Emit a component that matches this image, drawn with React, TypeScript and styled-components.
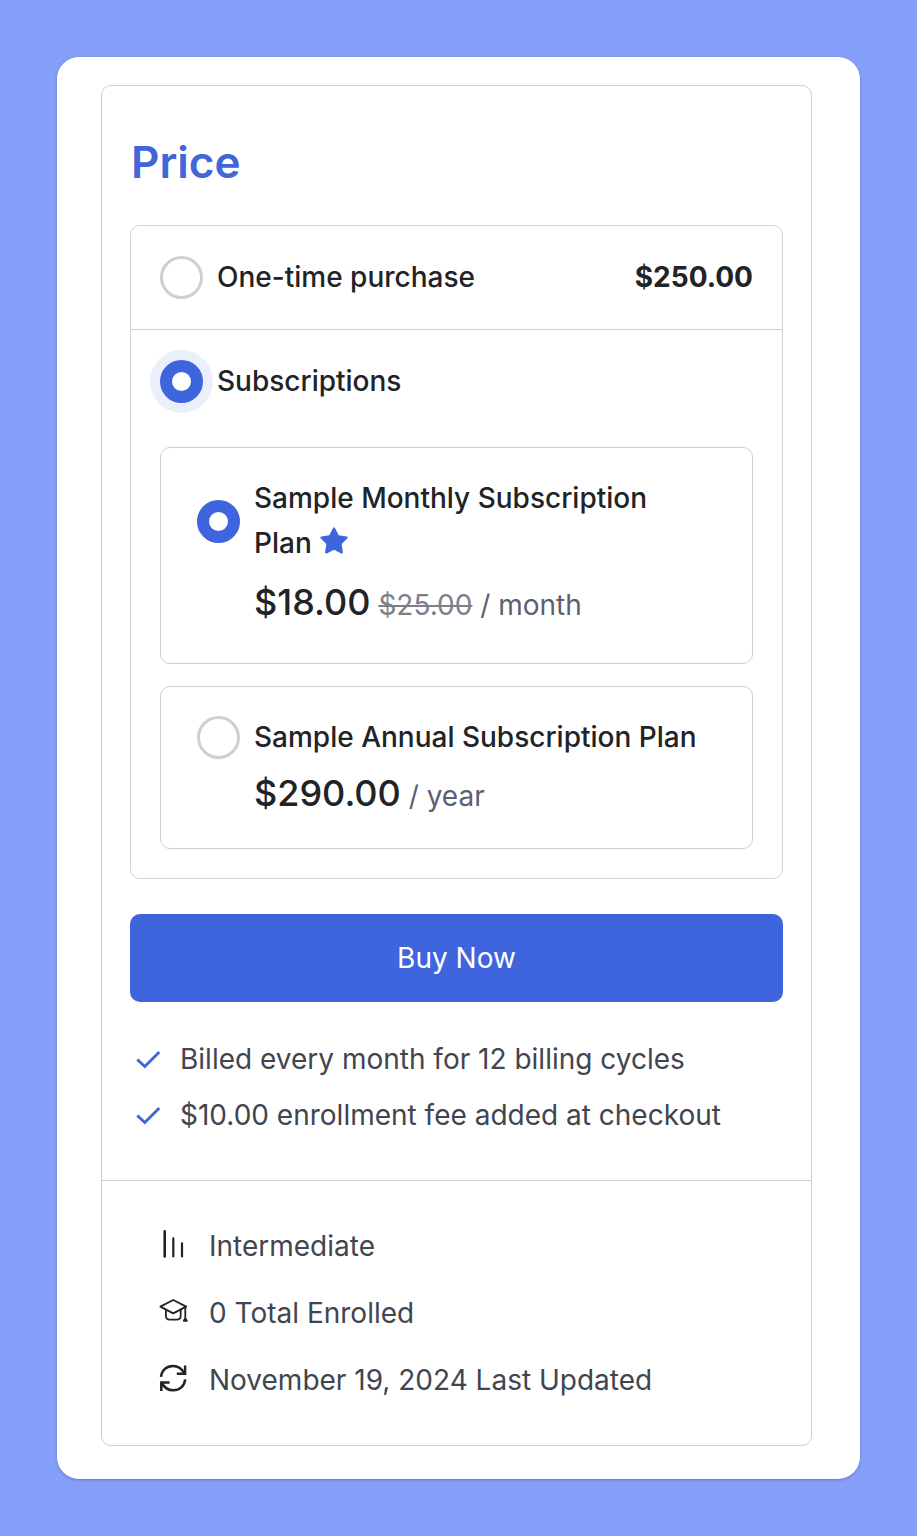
import React, { useState } from "react";
import styled, { createGlobalStyle, css } from "styled-components";

const GlobalStyle = createGlobalStyle`
  *, *::before, *::after { box-sizing: border-box; }
  body {
    margin: 0;
    background: #869ff8;
    color: #212327;
    font-family: Inter, "Liberation Sans", sans-serif;
    font-size: 28px;
    line-height: 45px;
  }
`;

const Page = styled.main`
  padding: 57px;
`;

const Card = styled.div`
  padding: 28px 48px 33px 44px;
  background: #fff;
  border-radius: 22px;
  box-shadow: 0 1px 3px rgba(40, 50, 110, 0.35);
`;

const Panel = styled.section`
  border: 1px solid #cdcfd5;
  border-radius: 10px;
`;

const Purchase = styled.form`
  padding: 48px 28px 42px;
`;

const Heading = styled.h2`
  margin: 0 0 35px;
  padding-left: 1px;
  color: #4066d8;
  font-size: 44px;
  font-weight: 600;
  line-height: 56px;
`;

const Options = styled.div`
  border: 1px solid #d3d5da;
  border-radius: 10px;
`;

const Option = styled.div`
  padding: 29px;

  & + & {
    border-top: 1px solid #cdcfd5;
  }
`;

const OptionLabel = styled.label`
  display: flex;
  align-items: center;
  gap: 14px;
  font-weight: 500;
`;

const OptionPrice = styled.strong`
  margin-left: auto;
  font-weight: 700;
`;

const Radio = styled.input.attrs({ type: "radio" })<{ $halo?: boolean }>`
  appearance: none;
  flex: none;
  width: 43px;
  height: 43px;
  margin: 0;
  border: 3px solid #cdcfd5;
  border-radius: 50%;
  background: #fff;

  &:checked {
    border: 12px solid #3e64de;
    ${(p) => p.$halo && css`box-shadow: 0 0 0 10px #ebeffc;`}
  }
`;

const Plans = styled.div`
  display: grid;
  gap: 22px;
  margin-top: 43px;
`;

const Plan = styled.label<{ $sale?: boolean }>`
  display: grid;
  grid-template-columns: auto 1fr;
  column-gap: 14px;
  align-items: center;
  padding: ${(p) => (p.$sale ? "28px 36px 31px" : "28px 36px 25px")};
  border: 1px solid #cdcfd5;
  border-radius: 10px;
`;

const PlanTitle = styled.span`
  font-weight: 500;
`;

const Featured = styled.span`
  white-space: nowrap;
`;

const StarIcon = styled.svg`
  width: 30px;
  height: 30px;
  vertical-align: -3px;
  fill: #3e64de;
`;

const PlanPrice = styled.span<{ $sale?: boolean }>`
  grid-column: 2;
  margin-top: ${(p) => (p.$sale ? "12px" : "9px")};
  color: #5b616f;
  line-height: 54px;
`;

const Amount = styled.span`
  font-size: 36px;
  font-weight: 500;
  line-height: 1;
  color: #212327;
`;

const OldAmount = styled.del`
  color: #7b808c;
`;

const BuyButton = styled.button`
  display: block;
  width: 100%;
  margin-top: 35px;
  padding: 22px;
  border: 0;
  border-radius: 10px;
  background: #3e64de;
  color: #fff;
  font: inherit;
  line-height: 44px;
`;

const Notes = styled.ul`
  display: grid;
  gap: 11px;
  margin: 35px 0 0;
  padding: 0;
  list-style: none;
  color: #41454f;
`;

const Note = styled.li`
  display: flex;
  align-items: center;
  gap: 14px;
`;

const Details = styled.ul`
  display: grid;
  gap: 22px;
  margin: 0;
  padding: 43px 57px 42px;
  border-top: 1px solid #cdcfd5;
  list-style: none;
  color: #41454f;
`;

const Detail = styled.li`
  display: flex;
  align-items: center;
  gap: 20px;
`;

const Icon = styled.svg`
  flex: none;
  margin-bottom: 4px;
  fill: none;
  stroke: #212327;
`;

const CheckIcon = styled.svg`
  flex: none;
  fill: none;
  stroke: #4066d8;
  stroke-width: 2.8;
`;

const notes = [
  "Billed every month for 12 billing cycles",
  "$10.00 enrollment fee added at checkout",
];

export default function App() {
  const [kind, setKind] = useState("subscription");
  const [plan, setPlan] = useState("monthly");

  return (
    <>
      <GlobalStyle />
      <Page>
        <Card>
          <Panel>
            <Purchase onSubmit={(e) => e.preventDefault()}>
              <Heading>Price</Heading>
              <Options>
                <Option>
                  <OptionLabel>
                    <Radio name="kind" checked={kind === "once"} onChange={() => setKind("once")} $halo />
                    One-time purchase
                    <OptionPrice>$250.00</OptionPrice>
                  </OptionLabel>
                </Option>
                <Option>
                  <OptionLabel>
                    <Radio
                      name="kind"
                      checked={kind === "subscription"}
                      onChange={() => setKind("subscription")}
                      $halo
                    />
                    Subscriptions
                  </OptionLabel>
                  <Plans>
                    <Plan $sale>
                      <Radio name="plan" checked={plan === "monthly"} onChange={() => setPlan("monthly")} />
                      <PlanTitle>
                        Sample Monthly Subscription{" "}
                        <Featured>
                          Plan{" "}
                          <StarIcon viewBox="0 0 30 30" aria-hidden="true">
                            <path d="M13.9 2.2q1.1-1.8 2.2 0l3.6 7 7.8 1.3q2 .5.7 2l-5.6 5.6 1.3 8q.1 2-1.7 1.3L15 23.7l-7.2 3.7q-1.8.7-1.7-1.3l1.3-8-5.6-5.6q-1.3-1.5.7-2l7.8-1.3z" />
                          </StarIcon>
                        </Featured>
                      </PlanTitle>
                      <PlanPrice $sale>
                        <Amount>$18.00</Amount> <OldAmount>$25.00</OldAmount> / month
                      </PlanPrice>
                    </Plan>
                    <Plan>
                      <Radio name="plan" checked={plan === "annual"} onChange={() => setPlan("annual")} />
                      <PlanTitle>Sample Annual Subscription Plan</PlanTitle>
                      <PlanPrice>
                        <Amount>$290.00</Amount> / year
                      </PlanPrice>
                    </Plan>
                  </Plans>
                </Option>
              </Options>
              <BuyButton type="submit">Buy Now</BuyButton>
              <Notes>
                {notes.map((text) => (
                  <Note key={text}>
                    <CheckIcon width="36" height="36" viewBox="0 0 36 36" aria-hidden="true">
                      <path d="M7.3 17.5 14.8 24.6 29.3 10" />
                    </CheckIcon>
                    {text}
                  </Note>
                ))}
              </Notes>
            </Purchase>
            <Details>
              <Detail>
                <Icon width="30" height="30" viewBox="0 0 30 30" strokeWidth="2.2" strokeLinecap="round" aria-hidden="true">
                  <path d="M5.7 1.4v25" strokeWidth="2.6" />
                  <path d="M14.3 8.4v18M23 13.4v13" />
                </Icon>
                Intermediate
              </Detail>
              <Detail>
                <Icon
                  width="30"
                  height="30"
                  viewBox="0 0 30 30"
                  strokeWidth="1.8"
                  strokeLinecap="round"
                  strokeLinejoin="round"
                  aria-hidden="true"
                >
                  <path d="M1.4 9.6 14.2 3l13 6.6-13 6.8z" />
                  <path d="M6.9 12.6v6.2q0 3.8 3.8 3.8h7.2q3.8 0 3.8-3.8v-6.2M26.3 10.4v10.8M26.3 21.2l-1.5 2.6h3z" />
                </Icon>
                0 Total Enrolled
              </Detail>
              <Detail>
                <Icon width="30" height="30" viewBox="0 0 30 30" strokeWidth="2.5" aria-hidden="true">
                  <path d="M2 12.9C2.6 6.1 7.8 1.9 14 1.9c4.8 0 8.8 2.5 11.2 7.2M26.1 1.5v8.2h-8.3" />
                  <path d="M26.2 15.3C25.6 22.1 20.4 26.3 14.2 26.3c-4.8 0-8.8-2.5-11.2-7.2M2.3 26.9v-8.4h8.3" />
                </Icon>
                November 19, 2024 Last Updated
              </Detail>
            </Details>
          </Panel>
        </Card>
      </Page>
    </>
  );
}
